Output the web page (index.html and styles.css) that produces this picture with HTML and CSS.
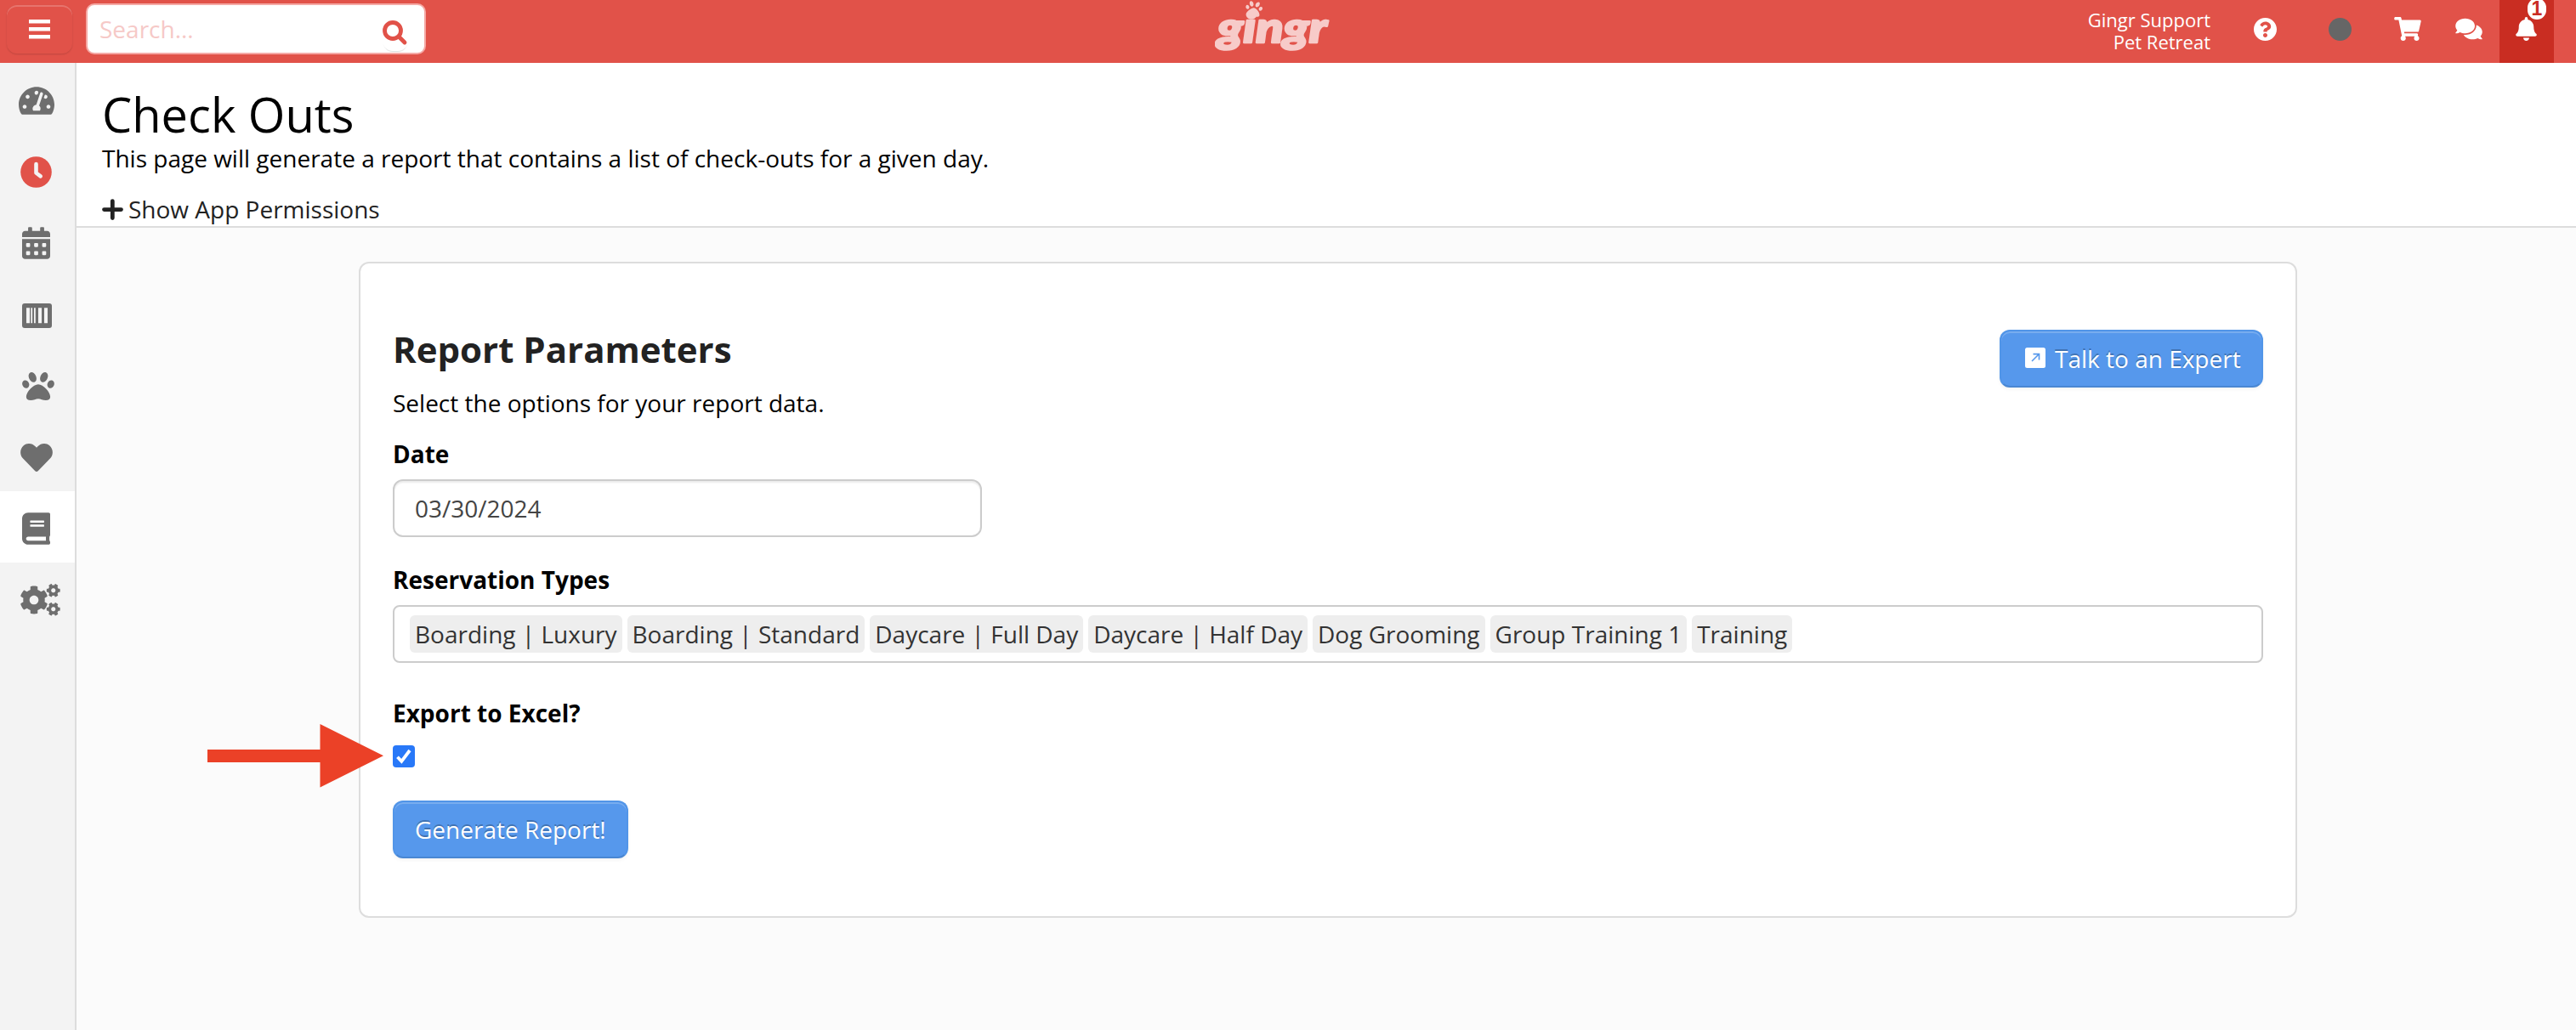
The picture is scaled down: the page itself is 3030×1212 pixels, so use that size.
FILE: index.html
```html
<!DOCTYPE html>
<html lang="en">

<head>
    <meta charset="UTF-8">
    <meta name="viewport" content="width=device-width, initial-scale=1.0">
    <title>Check Outs</title>
    <link rel="stylesheet" href="styles.css">
</head>

<body>
    <!-- Shared icon shapes -->
    <svg class="sprite">
        <symbol id="paw" viewBox="0 32 512 448">
            <path d="M256 224c-79.41 0-192 122.76-192 200.25 0 34.9 26.81 55.75 71.74 55.75 48.84 0 81.09-25.08 120.26-25.08 39.51 0 71.85 25.08 120.26 25.08 44.93 0 71.74-20.85 71.74-55.75C448 346.76 335.41 224 256 224zm-147.28-12.61c-10.4-34.65-42.44-57.09-71.56-50.13-29.12 6.96-44.29 40.69-33.89 75.34 10.4 34.65 42.44 57.09 71.56 50.13 29.12-6.96 44.29-40.69 33.89-75.34zm84.72-20.78c30.94-8.14 42.94-49.8 26.79-93.06-16.15-43.26-53.95-71.72-84.89-63.58-30.94 8.14-42.94 49.8-26.79 93.06 16.15 43.26 53.95 71.72 84.89 63.58zm281.39-29.34c-29.12-6.96-61.15 15.48-71.56 50.13-10.4 34.65 4.77 68.38 33.89 75.34 29.12 6.96 61.15-15.48 71.56-50.13 10.4-34.65-4.77-68.38-33.89-75.34zm-156.27 29.34c30.94 8.14 68.74-20.32 84.89-63.58 16.15-43.26 4.15-84.92-26.79-93.06-30.94-8.14-68.74 20.32-84.89 63.58-16.15 43.26-4.15 84.92 26.79 93.06z"/>
        </symbol>
        <symbol id="cog" viewBox="0 0 512 512">
            <path d="M487.4 315.7l-42.6-24.6c4.3-23.2 4.3-47 0-70.2l42.6-24.6c4.9-2.8 7.1-8.6 5.5-14-11.1-35.6-30-67.8-54.7-94.6-3.8-4.1-10-5.1-14.8-2.3L380.8 110c-17.9-15.4-38.5-27.3-60.8-35.1V25.8c0-5.6-3.9-10.5-9.4-11.7-36.7-8.2-74.3-7.8-109.2 0-5.5 1.2-9.4 6.1-9.4 11.7V75c-22.2 7.9-42.8 19.8-60.8 35.1L88.7 85.5c-4.9-2.8-11-1.9-14.8 2.3-24.7 26.7-43.6 58.9-54.7 94.6-1.7 5.4.6 11.2 5.5 14L67.3 221c-4.3 23.2-4.3 47 0 70.2l-42.6 24.6c-4.9 2.8-7.1 8.6-5.5 14 11.1 35.6 30 67.8 54.7 94.6 3.8 4.1 10 5.1 14.8 2.3l42.6-24.6c17.9 15.4 38.5 27.3 60.8 35.1v49.2c0 5.6 3.9 10.5 9.4 11.7 36.7 8.2 74.3 7.8 109.2 0 5.5-1.2 9.4-6.1 9.4-11.7v-49.2c22.2-7.9 42.8-19.8 60.8-35.1l42.6 24.6c4.9 2.8 11 1.9 14.8-2.3 24.7-26.7 43.6-58.9 54.7-94.6 1.5-5.5-.7-11.3-5.6-14.1zM256 336c-44.1 0-80-35.9-80-80s35.9-80 80-80 80 35.9 80 80-35.9 80-80 80z"/>
        </symbol>
    </svg>

    <header class="topbar">
        <button class="menu-btn">
            <svg width="25" height="23" viewBox="0 0 25 23"><path d="M0 0h25v4.5H0zM0 9h25v4.5H0zM0 18h25v4.5H0z"/></svg>
        </button>
        <div class="search">
            <span class="search-text">Search...</span>
            <span class="search-btn">
                <svg width="30" height="30" viewBox="0 0 30 30"><circle cx="12" cy="12" r="9.5"/><path d="M19 19l7 7"/></svg>
            </span>
        </div>
        <div class="logo">
            <svg width="140" height="74" viewBox="0 0 140 74">
                <text x="3" y="50" textLength="129" lengthAdjust="spacingAndGlyphs">gingr</text>
                <use href="#paw" x="36" y="1" width="20" height="19" transform="rotate(8 46 10)"/>
            </svg>
        </div>
        <div class="topbar-right">
            <div class="account">Gingr Support<br>Pet Retreat</div>
            <svg class="help" width="27" height="27" viewBox="8 8 496 496"><path d="M504 256c0 136.997-111.043 248-248 248S8 392.997 8 256C8 119.083 119.043 8 256 8s248 111.083 248 248zM262.655 90c-54.497 0-89.255 22.957-116.549 63.758-3.536 5.286-2.353 12.415 2.715 16.258l34.699 26.31c5.205 3.947 12.621 3.008 16.665-2.122 17.864-22.658 30.113-35.797 57.303-35.797 20.429 0 45.698 13.148 45.698 32.958 0 14.976-12.363 22.667-32.534 33.976C247.128 238.528 216 254.941 216 296v4c0 6.627 5.373 12 12 12h56c6.627 0 12-5.373 12-12v-1.333c0-28.462 83.186-29.647 83.186-106.667 0-58.002-60.165-102-116.531-102zM256 338c-25.365 0-46 20.635-46 46 0 25.364 20.635 46 46 46s46-20.636 46-46c0-25.365-20.635-46-46-46z"/></svg>
            <span class="status"></span>
            <svg class="cart" width="32" height="28" viewBox="0 0 576 512"><path d="M528.12 301.319l47.273-208C578.806 78.301 567.391 64 551.99 64H159.208l-9.166-44.81C147.758 8.021 137.93 0 126.529 0H24C10.745 0 0 10.745 0 24v16c0 13.255 10.745 24 24 24h69.883l70.248 343.435C147.325 417.1 136 435.222 136 456c0 30.928 25.072 56 56 56s56-25.072 56-56c0-15.674-6.447-29.835-16.824-40h209.647C430.447 426.165 424 440.326 424 456c0 30.928 25.072 56 56 56s56-25.072 56-56c0-22.172-12.888-41.332-31.579-50.405l5.517-24.276c3.413-15.018-8.002-29.319-23.403-29.319H218.117l-6.545-32h293.145c11.206 0 20.92-7.754 23.403-18.681z"/></svg>
            <svg class="comments" width="32" height="28" viewBox="0 0 576 512"><path d="M416 192c0-88.4-93.1-160-208-160S0 103.6 0 192c0 34.3 14.1 65.9 38 92-13.4 30.2-35.5 54.2-35.8 54.5-2.2 2.3-2.8 5.7-1.5 8.7S4.8 352 8 352c36.6 0 66.9-12.3 88.7-25 32.2 15.7 70.3 25 111.3 25 114.9 0 208-71.6 208-160zm122 220c23.9-26 38-57.7 38-92 0-66.9-53.5-124.2-129.3-148.1.9 6.6 1.3 13.3 1.3 20.1 0 105.9-107.7 192-240 192-10.8 0-21.3-.8-31.7-1.9C207.8 439.6 281.8 480 368 480c41 0 79.1-9.2 111.3-25 21.8 12.7 52.1 25 88.7 25 3.2 0 6.1-1.9 7.3-4.8 1.3-2.9.7-6.3-1.5-8.7-.3-.3-22.4-24.2-35.8-54.5z"/></svg>
            <div class="alerts">
                <svg width="25" height="28" viewBox="0 0 448 512"><path d="M224 512c35.32 0 63.97-28.65 63.97-64H160.03c0 35.35 28.65 64 63.97 64zm215.39-149.71c-19.32-20.76-55.47-51.99-55.47-154.29 0-77.7-54.48-139.9-127.94-155.16V32c0-17.67-14.32-32-31.98-32s-31.98 14.33-31.98 32v20.84C118.56 68.1 64.08 130.3 64.08 208c0 102.3-36.15 133.53-55.47 154.29-6 6.45-8.66 14.16-8.61 21.71.11 16.4 12.98 32 32.1 32h383.8c19.12 0 32-15.6 32.1-32 .05-7.55-2.61-15.27-8.61-21.71z"/></svg>
                <span class="badge">1</span>
            </div>
        </div>
    </header>

    <div class="page">
        <nav class="sidebar">
            <a class="nav-item"><svg width="42" height="33" viewBox="0 32 576 448"><path d="M288 32C128.94 32 0 160.94 0 320c0 52.8 14.25 102.26 39.06 144.8 5.61 9.62 16.3 15.2 27.44 15.2h443c11.14 0 21.83-5.58 27.44-15.2C561.75 422.26 576 372.8 576 320c0-159.06-128.94-288-288-288zm0 64c14.71 0 26.58 10.13 30.32 23.65-1.11 2.26-2.64 4.23-3.45 6.67l-9.22 27.67c-5.13 3.49-10.97 6.01-17.64 6.01-17.67 0-32-14.33-32-32S270.33 96 288 96zM96 384c-17.67 0-32-14.33-32-32s14.33-32 32-32 32 14.33 32 32-14.33 32-32 32zm48-160c-17.67 0-32-14.33-32-32s14.33-32 32-32 32 14.33 32 32-14.33 32-32 32zm246.77-72.41l-61.33 184C343.13 347.33 352 364.54 352 384c0 11.72-3.38 22.55-8.88 32H232.88c-5.5-9.45-8.88-20.28-8.88-32 0-33.94 26.5-61.43 59.9-63.59l61.34-184.01c4.17-12.56 17.73-19.45 30.36-15.17 12.57 4.19 19.35 17.79 15.17 30.36zm14.66 57.2l15.52-46.55c3.47-1.29 7.13-2.23 11.05-2.23 17.67 0 32 14.33 32 32s-14.33 32-32 32c-11.38-.01-20.89-6.28-26.57-15.22zM480 384c-17.67 0-32-14.33-32-32s14.33-32 32-32 32 14.33 32 32-14.33 32-32 32z"/></svg></a>
            <a class="nav-item clock"><svg width="37" height="37" viewBox="0 0 37 37"><circle cx="18.5" cy="18.5" r="18.3"/><path d="M18.5 9v10.5l5.2 3.8"/></svg></a>
            <a class="nav-item calendar"><svg width="33" height="38" viewBox="0 0 448 512"><path d="M0 464c0 26.5 21.5 48 48 48h352c26.5 0 48-21.5 48-48V192H0v272zm320-196c0-6.6 5.4-12 12-12h40c6.6 0 12 5.4 12 12v40c0 6.6-5.4 12-12 12h-40c-6.6 0-12-5.4-12-12v-40zm0 128c0-6.6 5.4-12 12-12h40c6.6 0 12 5.4 12 12v40c0 6.6-5.4 12-12 12h-40c-6.6 0-12-5.4-12-12v-40zM192 268c0-6.6 5.4-12 12-12h40c6.6 0 12 5.4 12 12v40c0 6.6-5.4 12-12 12h-40c-6.6 0-12-5.4-12-12v-40zm0 128c0-6.6 5.4-12 12-12h40c6.6 0 12 5.4 12 12v40c0 6.6-5.4 12-12 12h-40c-6.6 0-12-5.4-12-12v-40zM64 268c0-6.6 5.4-12 12-12h40c6.6 0 12 5.4 12 12v40c0 6.6-5.4 12-12 12H76c-6.6 0-12-5.4-12-12v-40zm0 128c0-6.6 5.4-12 12-12h40c6.6 0 12 5.4 12 12v40c0 6.6-5.4 12-12 12H76c-6.6 0-12-5.4-12-12v-40zM400 64h-48V16c0-8.8-7.2-16-16-16h-32c-8.8 0-16 7.2-16 16v48H160V16c0-8.8-7.2-16-16-16h-32c-8.8 0-16 7.2-16 16v48H48C21.5 64 0 85.5 0 112v48h448v-48c0-26.5-21.5-48-48-48z"/></svg></a>
            <a class="nav-item barcode"><svg width="35" height="29" viewBox="0 0 35 29"><rect width="35" height="29" rx="3"/><path class="gap" d="M5 5.3h4v18H5zM10.3 5.3h1.8v18h-1.8zM14 5.3h1.8v18H14zM19 5.3h4v18h-4zM26 5.3h4v18h-4z"/></svg></a>
            <a class="nav-item paw"><svg width="38" height="33"><use href="#paw"/></svg></a>
            <a class="nav-item"><svg width="38" height="33" viewBox="0 32 512 448"><path d="M462.3 62.6C407.5 15.9 326 24.3 275.7 76.2L256 96.5l-19.7-20.3C186.1 24.3 104.5 15.9 49.7 62.6c-62.8 53.6-66.1 149.8-9.9 207.9l193.5 199.8c12.5 12.9 32.8 12.9 45.3 0l193.5-199.8c56.3-58.1 53-154.3-9.8-207.9z"/></svg></a>
            <a class="nav-item active"><svg width="33" height="38" viewBox="0 0 448 512"><path d="M448 360V24c0-13.3-10.7-24-24-24H96C43 0 0 43 0 96v320c0 53 43 96 96 96h328c13.3 0 24-10.7 24-24v-16c0-7.5-3.5-14.3-8.9-18.7-4.2-15.4-4.2-59.3 0-74.7 5.4-4.3 8.9-11.1 8.9-18.6zM128 134c0-3.3 2.7-6 6-6h212c3.3 0 6 2.7 6 6v20c0 3.3-2.7 6-6 6H134c-3.3 0-6-2.7-6-6v-20zm0 64c0-3.3 2.7-6 6-6h212c3.3 0 6 2.7 6 6v20c0 3.3-2.7 6-6 6H134c-3.3 0-6-2.7-6-6v-20zm253.4 250H96c-17.7 0-32-14.3-32-32 0-17.6 14.4-32 32-32h285.4c-1.9 17.1-1.9 46.9 0 64z"/></svg></a>
            <a class="nav-item cogs"><svg width="48" height="38" viewBox="0 0 48 38">
                <use href="#cog" x="-1" y="2" width="34" height="34"/>
                <use href="#cog" x="30.5" y="-.5" width="16.5" height="16.5" transform="rotate(30 38.75 7.75)"/>
                <use href="#cog" x="30.5" y="21.5" width="16.5" height="16.5" transform="rotate(30 38.75 29.75)"/>
            </svg></a>
        </nav>

        <main class="content">
            <section class="page-header">
                <h1>Check Outs</h1>
                <p>This page will generate a report that contains a list of check-outs for a given day.</p>
                <a class="permissions"><svg width="25" height="25" viewBox="0 0 25 25"><path d="M12.3 2.6v20M2.5 12.6h20"/></svg>Show App Permissions</a>
            </section>

            <section class="card">
                <div class="card-top">
                    <div>
                        <h2>Report Parameters</h2>
                        <p>Select the options for your report data.</p>
                    </div>
                    <button class="btn expert">
                        <svg width="24" height="24" viewBox="0 0 24 24"><rect width="24" height="24" rx="2.5"/><path d="M8 16l8-8M9.5 7.6h7v7"/></svg>Talk to an Expert
                    </button>
                </div>

                <label>Date</label>
                <div class="date-input">03/30/2024</div>

                <label>Reservation Types</label>
                <div class="types">
                    <span>Boarding | Luxury</span>
                    <span>Boarding | Standard</span>
                    <span>Daycare | Full Day</span>
                    <span>Daycare | Half Day</span>
                    <span>Dog Grooming</span>
                    <span>Group Training 1</span>
                    <span>Training</span>
                </div>

                <label>Export to Excel?</label>
                <div class="export">
                    <span class="checkbox"><svg width="26" height="26" viewBox="0 0 26 26"><path d="M5.5 13.8l4.8 5L20 6"/></svg></span>
                    <svg class="arrow" width="208" height="75" viewBox="0 0 208 75"><path d="M0 30h132.5V0L207 37.3 132.500 74.600V45H0z"/></svg>
                </div>

                <button class="btn">Generate Report!</button>
            </section>
        </main>
    </div>
</body>

</html>
```
FILE: styles.css
```css
/* General styling */
* {
    box-sizing: border-box;
}

body {
    margin: 0;
    font-family: "Open Sans", sans-serif;
    font-size: 28px;
    line-height: 40px;
    color: #000;
    background: #fbfbfb;
}

h1, h2, p {
    margin: 0;
}

svg {
    display: block;
    flex: none;
}

.sprite {
    display: none;
}

/* Top bar */
.topbar {
    position: relative;
    display: flex;
    height: 74px;
    padding-left: 8px;
    background: #e15249;
    color: #fff;
    fill: #fff;
}

.menu-btn {
    width: 77px;
    height: 57px;
    margin: 6px 16px 0 0;
    padding: 0 0 0 26px;
    border: none;
    border-radius: 12px;
    background: none;
    fill: #fff;
    box-shadow: inset 0 2px 0 rgba(255, 255, 255, 0.2), 0 1px 2px rgba(0, 0, 0, 0.15);
}

.search {
    display: flex;
    justify-content: space-between;
    width: 400px;
    height: 60px;
    margin-top: 4px;
    padding: 8px 19px 0 14px;
    border: 2px solid #f5a9a5;
    border-radius: 10px;
    background: #fff;
}

.search-text {
    color: #f6c9c7;
}

.search-btn {
    height: 46px;
    padding-top: 10px;
    border-radius: 12px;
    box-shadow: 0 2px 1px -1px #ddd;
}

.search-btn svg {
    fill: none;
    stroke: #e15249;
    stroke-width: 4.8;
    stroke-linecap: round;
}

.logo {
    position: absolute;
    left: 1429px;
    top: 0;
    fill: #f7cbc9;
}

.logo text {
    font-family: Lato, sans-serif;
    font-size: 50px;
    font-weight: 900;
    font-style: italic;
    stroke: #f7cbc9;
    stroke-width: 2.5;
    stroke-linejoin: round;
}

.topbar-right {
    display: flex;
    align-items: flex-start;
    margin-left: auto;
    padding-right: 26px;
}

.account {
    margin: 10px 51px 0 0;
    font-size: 22px;
    line-height: 26px;
    text-align: right;
}

.help {
    margin: 21px 61px 0 0;
}

.status {
    width: 27px;
    height: 27px;
    margin: 21px 50px 0 0;
    border-radius: 50%;
    background: #666;
}

.cart {
    margin: 20px 40px 0 0;
}

.comments {
    margin: 20px 20px 0 0;
}

.alerts {
    position: relative;
    width: 64px;
    height: 74px;
    padding: 20px 0 0 19px;
    background: #c92d22;
}

.badge {
    position: absolute;
    left: 33px;
    top: -2px;
    width: 22px;
    height: 25px;
    border-radius: 11px;
    background: #fff;
    color: #c92d22;
    font: bold 23px/25px "Liberation Sans", sans-serif;
    text-align: center;
}

/* Sidebar */
.page {
    display: flex;
    height: 1138px;
}

.sidebar {
    width: 90px;
    border-right: 2px solid #ddd;
    background: #f3f3f3;
    fill: #6e6e6e;
}

.nav-item {
    display: flex;
    align-items: center;
    justify-content: center;
    height: 84px;
    padding: 4px 3px 0 0;
}

.nav-item.active {
    background: #fff;
}

.clock svg {
    fill: #e15249;
}

.clock path {
    fill: none;
    stroke: #f3f3f3;
    stroke-width: 4.6;
    stroke-linecap: round;
    stroke-linejoin: round;
}

.barcode svg {
    margin: 3px 0 0 2px;
}

.barcode .gap {
    fill: #f3f3f3;
}

.paw svg {
    margin-left: 5px;
}

.cogs svg {
    margin-left: 10px;
}

/* Page header */
.content {
    flex: 1;
}

.page-header {
    height: 194px;
    padding: 20px 0 0 30px;
    border-bottom: 2px solid #ddd;
    background: #fff;
}

h1 {
    font-size: 56px;
    font-weight: 400;
    line-height: 80px;
}

.page-header p {
    margin-top: -8px;
}

.permissions {
    display: flex;
    align-items: center;
    gap: 6px;
    margin-top: 20px;
    color: #222;
}

.permissions svg {
    fill: none;
    stroke: #222;
    stroke-width: 4.8;
    stroke-linecap: round;
}

/* Report card */
.card {
    width: 2280px;
    height: 772px;
    margin: 40px 0 0 332px;
    padding: 78px 38px 0;
    border: 2px solid #ddd;
    border-radius: 12px;
    background: #fff;
}

.card-top {
    display: flex;
    justify-content: space-between;
    align-items: flex-start;
}

h2 {
    margin-top: -7px;
    color: #222;
    font-size: 42px;
    font-weight: 700;
    line-height: 60px;
}

.card-top p {
    margin-top: 13px;
}

label {
    display: block;
    margin-top: 20px;
    font-weight: 700;
}

.date-input {
    width: 693px;
    height: 68px;
    margin: 10px 0 30px;
    padding: 12px 24px;
    border: 2px solid #ccc;
    border-radius: 12px;
    color: #444;
    box-shadow: inset 0 2px 2px rgba(0, 0, 0, 0.08);
}

.types {
    display: flex;
    gap: 6px;
    height: 68px;
    margin: 10px 0 39px;
    padding: 10px 18px;
    border: 2px solid #ccc;
    border-radius: 8px;
}

.types span {
    height: 44px;
    padding: 0 6px;
    border-radius: 6px;
    background: #eee;
    color: #333;
    line-height: 44px;
}

.export {
    position: relative;
    height: 26px;
    margin: 18px 0 39px;
}

.checkbox {
    display: block;
    width: 26px;
    height: 26px;
    border-radius: 4px;
    background: #2878f8;
}

.checkbox svg {
    fill: none;
    stroke: #fff;
    stroke-width: 3.8;
}

/* Pointer towards the checkbox */
.arrow {
    position: absolute;
    left: -218px;
    top: -25px;
    fill: #eb4127;
}

.btn {
    display: flex;
    align-items: center;
    height: 68px;
    padding: 0 24px;
    border: 2px solid #5195e8;
    border-bottom-color: #4987d3;
    border-radius: 12px;
    background: #5698ec;
    color: #fff;
    font: 28px/40px "Open Sans", sans-serif;
    text-shadow: 0 -2px 0 rgba(0, 0, 0, 0.25);
    box-shadow: inset 0 2px 0 rgba(255, 255, 255, 0.2), 0 2px 4px rgba(0, 0, 0, 0.05);
}

.expert {
    width: 310px;
}

.expert svg {
    margin: -2px 11px 0 4px;
    fill: #fff;
}

.expert path {
    fill: none;
    stroke: #5698ec;
    stroke-width: 1.6;
}
```
